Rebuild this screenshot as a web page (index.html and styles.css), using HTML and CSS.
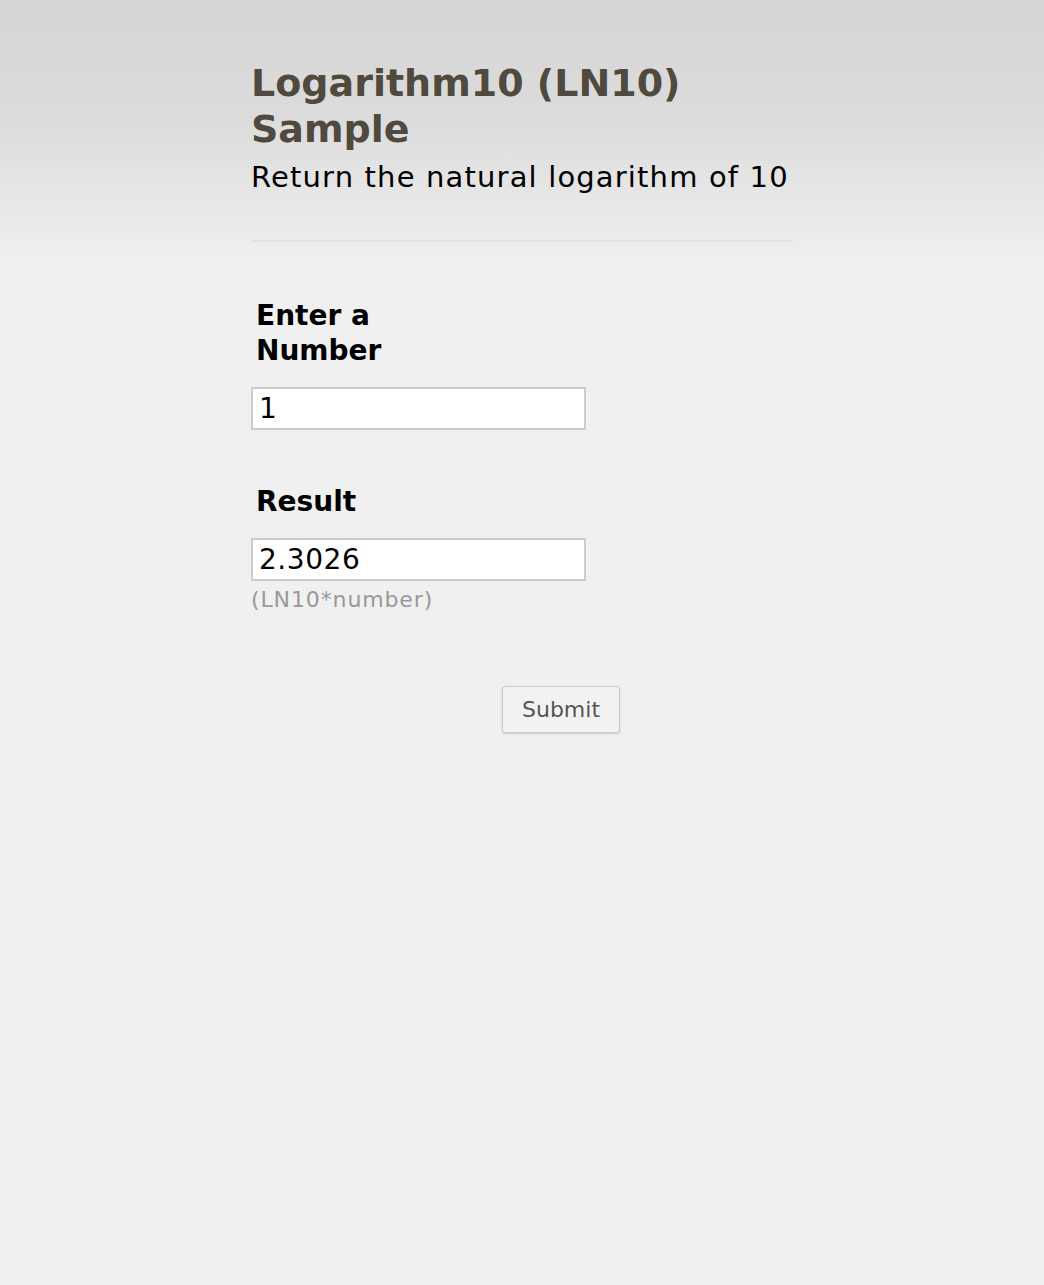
FILE: index.html
```html
<!DOCTYPE html>
<html lang="en">
<head>
<meta charset="utf-8">
<title>Logarithm10 (LN10) Sample</title>
<link rel="stylesheet" href="styles.css">
</head>
<body>
<div class="page">
  <header class="header">
    <h1 class="title">Logarithm10 (LN10) Sample</h1>
    <p class="subtitle">Return the natural logarithm of 10</p>
  </header>
  <form class="form">
    <div class="field">
      <label class="label" for="num">Enter a Number</label>
      <input class="input" id="num" type="text" value="1">
    </div>
    <div class="field">
      <label class="label" for="res">Result</label>
      <input class="input" id="res" type="text" value="2.3026">
      <div class="hint">(LN10*number)</div>
    </div>
    <div class="actions">
      <button class="button" type="button">Submit</button>
    </div>
  </form>
</div>
</body>
</html>
```
FILE: styles.css
```css
html, body {
  margin: 0;
  padding: 0;
}
body {
  min-height: 1285px;
  background: #f0f0f0 linear-gradient(to bottom, #d5d5d5 0px, #dcdcdc 120px, #f0f0f0 265px) no-repeat;
  background-size: 100% 270px;
  font-family: "DejaVu Sans", Verdana, sans-serif;
  color: #000;
}
.page {
  width: 542px;
  margin: 0 auto;
  padding-top: 60px;
}
.header {
  border-bottom: 2px solid #e3e3e3;
  padding-bottom: 46px;
}
.title {
  margin: 0;
  font-size: 38px;
  line-height: 46px;
  font-weight: bold;
  color: #4f4a3d;
}
.subtitle {
  margin: 8px 0 0;
  font-size: 29px;
  line-height: 34px;
  letter-spacing: 0.04em;
  font-weight: normal;
}
.form {
  display: flex;
  flex-direction: column;
  gap: 54px;
  padding-top: 56px;
}
.field {
  display: flex;
  flex-direction: column;
  align-items: flex-start;
}
.label {
  display: block;
  width: 170px;
  padding-left: 5px;
  font-size: 28px;
  line-height: 35px;
  font-weight: bold;
  margin-bottom: 19px;
}
.input {
  box-sizing: border-box;
  width: 335px;
  height: 43px;
  margin: 0;
  padding: 0 6px;
  border: 2px solid #cccccc;
  background: #fff;
  font-family: "DejaVu Sans", Verdana, sans-serif;
  font-size: 28px;
  letter-spacing: 0.02em;
  color: #000;
  outline: none;
}
.hint {
  margin-top: 6px;
  font-size: 22px;
  line-height: 26px;
  letter-spacing: 0.04em;
  color: #999;
}
.actions {
  display: flex;
  justify-content: flex-start;
  padding-left: 251px;
  margin-top: 19px;
}
.button {
  box-sizing: border-box;
  width: 118px;
  height: 47px;
  border: 1px solid #c8c8c8;
  border-radius: 3px;
  background: #f2f2f2;
  box-shadow: 0 1px 2px rgba(0,0,0,0.15);
  font-family: "DejaVu Sans", Verdana, sans-serif;
  font-size: 22px;
  color: #555;
  cursor: pointer;
}
```
